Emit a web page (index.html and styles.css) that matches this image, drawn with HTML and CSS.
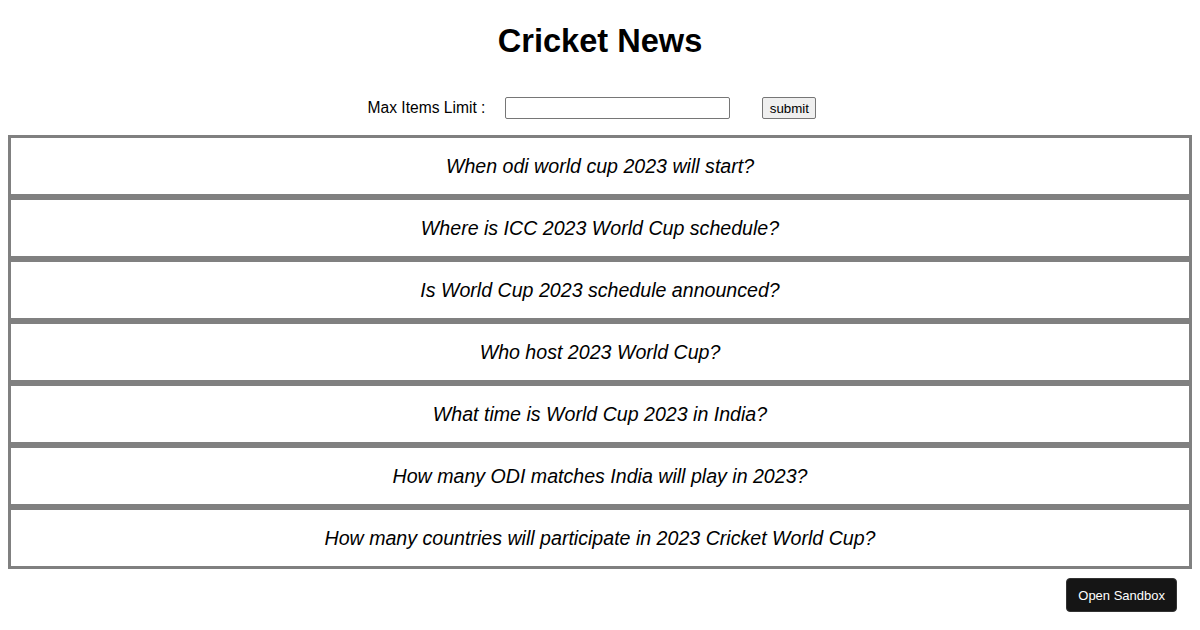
FILE: index.html
```html
<!DOCTYPE html>
<html lang="en">
<head>
  <meta charset="UTF-8">
  <meta name="viewport" content="width=device-width, initial-scale=1.0">
  <title>Cricket News</title>
  <link rel="stylesheet" href="styles.css">
</head>
<body>
  <h1>Cricket News</h1>

  <div class="limit-form">
    <label for="max-items">Max Items Limit :</label>
    <input type="text" id="max-items" />
    <button class="btn-submit">submit</button>
  </div>

  <ul class="news-list">
    <li>When odi world cup 2023 will start?</li>
    <li>Where is ICC 2023 World Cup schedule?</li>
    <li>Is World Cup 2023 schedule announced?</li>
    <li>Who host 2023 World Cup?</li>
    <li>What time is World Cup 2023 in India?</li>
    <li>How many ODI matches India will play in 2023?</li>
    <li>How many countries will participate in 2023 Cricket World Cup?</li>
  </ul>

  <a class="open-sandbox" href="#">Open Sandbox</a>
</body>
</html>
```

FILE: styles.css
```css
body {
  margin: 8px;
  font-family: 'Liberation Sans', Arial, sans-serif;
  color: #000;
  background-color: #fff;
}

h1 {
  font-size: 32.6px;
  text-align: center;
  margin: 14px 0 21px;
  line-height: 37px;
}

.limit-form {
  display: flex;
  align-items: center;
  justify-content: center;
  padding: 17px 0 16px;
  font-size: 15.6px;
}

.limit-form label {
  margin-right: 20px;
  margin-left: -16px;
}

.limit-form input {
  width: 225px;
  height: 22px;
  box-sizing: border-box;
  border: 1px solid #767676;
  border-radius: 2px;
  padding: 1px 2px;
  margin-right: 32px;
}

.btn-submit {
  font-family: 'Liberation Sans', Arial, sans-serif;
  font-size: 13.33px;
  height: 22px;
  width: 54px;
  padding: 0;
  background-color: #efefef;
  border: 1px solid #767676;
  border-radius: 2px;
  color: #000;
}

.news-list {
  list-style: none;
  margin: 0;
  padding: 0;
}

.news-list li {
  border: 3px solid #808080;
  height: 56px;
  display: flex;
  align-items: center;
  justify-content: center;
  font-size: 19.6px;
  font-style: italic;
}

.open-sandbox {
  position: fixed;
  right: 23px;
  bottom: 18px;
  background-color: #151515;
  color: #fff;
  font-size: 13px;
  text-decoration: none;
  padding: 0 11px;
  height: 34px;
  line-height: 34px;
  border-radius: 4px;
  border: 1px solid #333;
  box-sizing: border-box;
}
```
